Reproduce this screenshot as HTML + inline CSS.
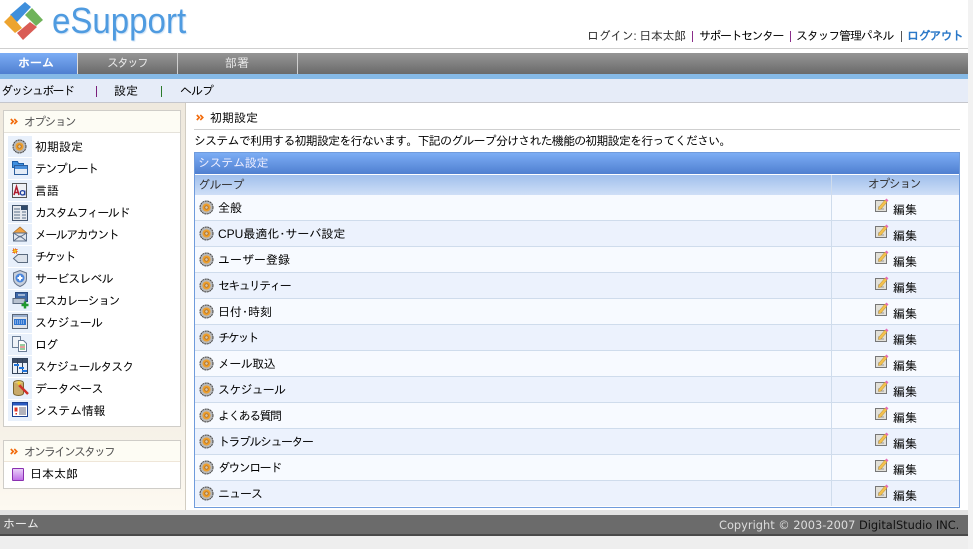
<!DOCTYPE html>
<html lang="ja"><head><meta charset="utf-8"><title>eSupport</title>
<style>
html,body{margin:0;padding:0;background:#f2f2f2}
#p{position:relative;width:973px;height:549px;overflow:hidden;background:#f2f2f2;font:12px/14px "Liberation Sans","IPAGothic","Noto Sans CJK JP",sans-serif;color:#000}
#p div,#p svg{position:absolute}
.t{white-space:nowrap}
.g{color:#555}
.sep{width:1px;height:11px}
.ic{left:8px;width:24px;height:21px;background:#e8f0fb}
.r1,.r2{left:195px;width:764px;height:25px}
.r1{background:#f7faff}.r2{background:#ecf2fd}
.l{left:195px;width:764px;height:1px;background:#cfdcec}
</style></head><body><div id="p">
<svg width="0" height="0" style="position:absolute"><defs>
<g id="disc"><circle cx="7.5" cy="7.5" r="6.5" fill="#b8b8b8" stroke="#444" stroke-dasharray="2 .6"/><circle cx="7.5" cy="7.5" r="4" fill="#ee9f2c"/><circle cx="7.5" cy="7.5" r="1.700" fill="#d8c8a8" stroke="#a5601a" stroke-width=".7"/></g>
<g id="pen"><rect x=".5" y="2.500" width="11" height="11" fill="#e2e0d8" stroke="#777"/><path d="M3 11h6M3 9h3" stroke="#999"/><path d="M4 9l6-7 2 2-6 7-2.500.500z" fill="#f3c14f" stroke="#b78a28" stroke-width=".5"/><path d="M10 2l1.500-1.500 2 2L12 4z" fill="#e56bb5"/></g>
<g id="arr" fill="none" stroke="#f26a0a" stroke-width="1.600"><path d="M.8 1l2.500 2.500L.8 6M4.300 1l2.500 2.500L4.300 6"/></g>
</defs></svg>

<!-- header -->
<div style="left:0;top:0;width:968px;height:53px;background:#fff"></div>
<div style="left:0;top:48px;width:968px;height:1px;background:#cfcfcf"></div>
<svg style="left:0;top:0" width="50" height="42" viewBox="0 0 50 42">
<path d="M25 2l6 5-14 15-7-7z" fill="#3f8fdc"/><path d="M32 8l11 12-7 6-11-11z" fill="#6fb35a"/><path d="M37 27L23 40l-6-7 13-11z" fill="#d95c55"/><path d="M4 22l7-7 11 13-7 5z" fill="#eda42f"/>
</svg>
<div class="t" style="left:52px;top:-3px;font-size:36px;line-height:48px;color:#4f9be0;transform:scaleX(.918);transform-origin:0 0;text-shadow:1px 1px 1px #cfe2f5">eSupport</div>
<div class="t g" style="left:587px;top:29px;color:#333;letter-spacing:-.4px">ログイン: 日本太郎</div>
<div class="sep" style="left:692px;top:31px;background:#8a2d8a"></div>
<div class="t" style="left:699px;top:29px;letter-spacing:-1.500px">サポートセンター</div>
<div class="sep" style="left:790px;top:31px;background:#8a2d8a"></div>
<div class="t" style="left:796px;top:29px;letter-spacing:-1.200px">スタッフ管理パネル</div>
<div class="sep" style="left:901px;top:31px;background:#555"></div>
<div class="t" style="left:907px;top:29px;color:#2a78c8;font-weight:bold;letter-spacing:-.8px">ログアウト</div>

<!-- tabs -->
<div style="left:0;top:53px;width:968px;height:21px;background:linear-gradient(#959595,#6a6a6a)"></div>
<div style="left:0;top:53px;width:77px;height:21px;background:linear-gradient(#7cadf5,#4f7fd0)"></div>
<div style="left:77px;top:53px;width:1px;height:21px;background:#dcdcdc"></div>
<div style="left:177px;top:53px;width:1px;height:21px;background:#cfcfcf"></div>
<div style="left:297px;top:53px;width:1px;height:21px;background:#cfcfcf"></div>
<div class="t" style="left:18px;top:56px;color:#fff;font-weight:bold">ホーム</div>
<div class="t" style="left:107px;top:56px;color:#e8e8e8;letter-spacing:-2px">スタッフ</div>
<div class="t" style="left:225px;top:56px;color:#e8e8e8">部署</div>
<div style="left:0;top:74px;width:968px;height:5px;background:#85b9e6"></div>
<div style="left:0;top:79px;width:968px;height:23px;background:#e6ecf8"></div>
<div style="left:0;top:102px;width:968px;height:1px;background:#c5c6cc"></div>
<div class="t" style="left:1px;top:84px;letter-spacing:-1.700px">ダッシュボード</div>
<div class="sep" style="left:96px;top:86px;background:#7a1f7a"></div>
<div class="t" style="left:114px;top:84px">設定</div>
<div class="sep" style="left:161px;top:86px;background:#2a7a2a"></div>
<div class="t" style="left:180px;top:84px;letter-spacing:-1px">ヘルプ</div>

<!-- sidebar -->
<div style="left:0;top:103px;width:185px;height:407px;background:linear-gradient(#efe9de 0,#f2ede3 70%,#fdf9f1 100%)"></div>
<div style="left:185px;top:103px;width:1px;height:407px;background:#d2cdc2"></div>
<div style="left:186px;top:103px;width:782px;height:407px;background:#fff"></div>
<div style="left:3px;top:110px;width:176px;height:315px;background:#fff;border:1px solid #cfcdc8"></div>
<div style="left:4px;top:111px;width:176px;height:21px;background:#fdfcf4;border-bottom:1px solid #e5e2da"></div>
<svg style="left:10px;top:118px" width="8" height="7"><use href="#arr"/></svg>
<div class="t g" style="left:24px;top:115px;letter-spacing:-1.800px">オプション</div>

<div class="ic" style="top:136px"></div><div class="ic" style="top:158px"></div><div class="ic" style="top:180px"></div><div class="ic" style="top:202px"></div><div class="ic" style="top:224px"></div><div class="ic" style="top:246px"></div><div class="ic" style="top:268px"></div><div class="ic" style="top:290px"></div><div class="ic" style="top:312px"></div><div class="ic" style="top:334px"></div><div class="ic" style="top:356px"></div><div class="ic" style="top:378px"></div><div class="ic" style="top:400px"></div>

<!-- menu icons -->
<svg style="left:12px;top:139px" width="15" height="15"><use href="#disc"/></svg>
<svg style="left:12px;top:160px" width="16" height="16"><path d="M.5 1.500h5l1 2h5v4h-11z" fill="#3d8fe0" stroke="#1e5fa8"/><rect x="2.500" y="5.500" width="13" height="9" fill="#e4ecf6" stroke="#2d5f9e"/><rect x="3" y="6" width="12" height="3" fill="#4a90dc"/></svg>
<svg style="left:12px;top:183px" width="16" height="16"><rect x=".5" y=".5" width="14" height="14" fill="#eef0f4" stroke="#555"/><path d="M2 12l2.500-8.500L7 12M3 9.500h3" fill="none" stroke="#b01c2e" stroke-width="1.500"/><circle cx="10.500" cy="9.800" r="2.200" fill="none" stroke="#1d3f9e" stroke-width="1.300"/><path d="M12.800 7.500v4.800" stroke="#1d3f9e" stroke-width="1.200"/></svg>
<svg style="left:12px;top:205px" width="16" height="16"><rect x=".5" y=".5" width="15" height="15" fill="#e6e9ee" stroke="#44566e"/><rect x="9" y="1" width="6" height="4" fill="#2f4a6b"/><path d="M2 4h6M2 7h6M2 10h6M2 13h6M10 7h4M10 10h4M10 13h4" stroke="#5a6e88"/></svg>
<svg style="left:12px;top:226px" width="16" height="16"><path d="M1 7l7-6 7 6z" fill="#f0a040" stroke="#a8702a" stroke-width=".7"/><rect x="1.500" y="7" width="13" height="8" fill="#dfe5ee" stroke="#5d6e88"/><path d="M1.500 15l6.500-5 6.500 5M1.500 7L8 11l6.500-4" fill="none" stroke="#5d6e88"/></svg>
<svg style="left:12px;top:248px" width="16" height="16"><path d="M6 6.500h9.500v8H6L1.500 10.500z" fill="#dce2ea" stroke="#5a6a7e"/><rect x="1" y="1" width="4" height="4" fill="#f4c020" stroke="#e03020" stroke-dasharray="1 1"/></svg>
<svg style="left:12px;top:270px" width="16" height="17"><path d="M8 .5l6.500 2.500v6c0 3.500-3 6-6.500 7.500-3.500-1.500-6.500-4-6.500-7.500V3z" fill="#c8d0dc" stroke="#66748a"/><circle cx="8" cy="8" r="4.500" fill="#4a86dc"/><path d="M8 5.500v5M5.500 8h5" stroke="#fff" stroke-width="2"/></svg>
<svg style="left:12px;top:292px" width="17" height="17"><rect x="3.500" y=".5" width="12" height="9" fill="#3d68a8" stroke="#2a4a80"/><rect x="1" y="6.500" width="12" height="5" fill="#b8c2d0" stroke="#5a6a80"/><path d="M6 3h7" stroke="#fff"/><path d="M9.500 13h7M13 9.500v7" stroke="#1f9a2e" stroke-width="2.500"/></svg>
<svg style="left:12px;top:314px" width="16" height="16"><rect x=".5" y=".5" width="15" height="14" fill="#dfe3ea" stroke="#5a6678"/><rect x="1" y="1" width="14" height="2" fill="#9ab0d0"/><rect x="2" y="5" width="12" height="6" fill="#2f74d0"/><path d="M3 7h10M3 9h10" stroke="#cfe0f8" stroke-dasharray="1 1"/></svg>
<svg style="left:12px;top:336px" width="16" height="16"><rect x=".5" y=".5" width="8" height="11" fill="#eef2f8" stroke="#6a7d96"/><path d="M6.500 4.500h5l3 3v8h-8z" fill="#fff" stroke="#6a7d96"/><path d="M8 9h5" stroke="#2f9a3e"/><path d="M8 11h5" stroke="#d03a3a"/><path d="M8 13h5" stroke="#2f9a3e"/></svg>
<svg style="left:12px;top:358px" width="16" height="16"><rect x=".5" y=".5" width="15" height="15" fill="#eaf0f8" stroke="#34445a"/><rect x="1" y="1" width="14" height="4" fill="#3c4c66"/><path d="M5.500 1v14M10.500 1v14" stroke="#34445a"/><path d="M2 7h5M7 10h5M10 13h5" stroke="#1f74dc" stroke-width="2"/></svg>
<svg style="left:12px;top:379px" width="17" height="18"><ellipse cx="6.500" cy="4" rx="5" ry="2.500" fill="#d8c38c" stroke="#7a6530"/><path d="M1.500 4v10c0 1.500 2.200 2.500 5 2.500s5-1 5-2.500V4" fill="#c9aa6a" stroke="#7a6530"/><path d="M7 6l9 9" stroke="#d03028" stroke-width="2.500"/><path d="M7 1.500l1 2 2 .5-2 1-1 2-1-2-2-1 2-.5z" fill="#f4d030"/></svg>
<svg style="left:12px;top:402px" width="16" height="16"><rect x=".5" y=".5" width="15" height="14" fill="#fff" stroke="#1a3f90"/><rect x="1" y="1" width="14" height="2.500" fill="#2a5ac0"/><path d="M7 6h7M7 8h7M7 10h7M7 12h7" stroke="#667"/><rect x="2.500" y="5.500" width="3" height="4" fill="#e03020"/><rect x="3.500" y="11" width="1.500" height="1.500" fill="#e03020"/></svg>

<!-- menu text -->
<div class="t" style="left:35px;top:140px">初期設定</div>
<div class="t" style="left:35px;top:162px;letter-spacing:-1.600px">テンプレート</div>
<div class="t" style="left:35px;top:184px">言語</div>
<div class="t" style="left:35px;top:206px;letter-spacing:-1.600px">カスタムフィールド</div>
<div class="t" style="left:35px;top:228px;letter-spacing:-1.600px">メールアカウント</div>
<div class="t" style="left:35px;top:250px;letter-spacing:-2.200px">チケット</div>
<div class="t" style="left:35px;top:272px;letter-spacing:-.9px">サービスレベル</div>
<div class="t" style="left:35px;top:294px;letter-spacing:-1.500px">エスカレーション</div>
<div class="t" style="left:35px;top:316px;letter-spacing:-.8px">スケジュール</div>
<div class="t" style="left:35px;top:338px;letter-spacing:-1px">ログ</div>
<div class="t" style="left:35px;top:360px;letter-spacing:-1.100px">スケジュールタスク</div>
<div class="t" style="left:35px;top:382px;letter-spacing:-.7px">データベース</div>
<div class="t" style="left:35px;top:404px;letter-spacing:-.3px">システム情報</div>

<!-- online -->
<div style="left:3px;top:440px;width:176px;height:47px;background:#fff;border:1px solid #cfcdc8"></div>
<div style="left:4px;top:441px;width:176px;height:20px;background:#fdfcf4;border-bottom:1px solid #efe6d8"></div>
<svg style="left:10px;top:448px" width="8" height="7"><use href="#arr"/></svg>
<div class="t g" style="left:24px;top:445px;letter-spacing:-2px">オンラインスタッフ</div>
<div style="left:12px;top:468px;width:10px;height:11px;background:linear-gradient(#e8d0f8,#c070e8);border:1px solid #8a30b0;border-radius:1px"></div>
<div class="t" style="left:30px;top:467px">日本太郎</div>

<!-- main -->
<svg style="left:196px;top:114px" width="8" height="7"><use href="#arr"/></svg>
<div class="t" style="left:210px;top:111px">初期設定</div>
<div style="left:194px;top:129px;width:766px;height:1px;background:#cfcfcf"></div>
<div class="t" style="left:194px;top:134px;letter-spacing:-.82px">システムで利用する初期設定を行ないます。下記のグループ分けされた機能の初期設定を行ってください。</div>

<div style="left:194px;top:152px;width:764px;height:354px;border:1px solid #6f9bdc;background:#fff"></div>
<div style="left:195px;top:153px;width:764px;height:21px;background:linear-gradient(#7cadf5,#4f7fd0)"></div>
<div class="t" style="left:198px;top:156px;color:#eef;letter-spacing:-.3px">システム設定</div>
<div style="left:195px;top:175px;width:764px;height:20px;background:linear-gradient(#a0bfec,#cfdff7)"></div>
<div class="t" style="left:198px;top:178px;color:#333;letter-spacing:-.5px">グループ</div>
<div class="t" style="left:868px;top:177px;color:#333;letter-spacing:-1.600px">オプション</div>

<div class="r1" style="top:195px"></div><div class="r2" style="top:221px"></div><div class="r1" style="top:247px"></div><div class="r2" style="top:273px"></div><div class="r1" style="top:299px"></div><div class="r2" style="top:325px"></div><div class="r1" style="top:351px"></div><div class="r2" style="top:377px"></div><div class="r1" style="top:403px"></div><div class="r2" style="top:429px"></div><div class="r1" style="top:455px"></div><div class="r2" style="top:481px"></div>
<div class="l" style="top:220px"></div><div class="l" style="top:246px"></div><div class="l" style="top:272px"></div><div class="l" style="top:298px"></div><div class="l" style="top:324px"></div><div class="l" style="top:350px"></div><div class="l" style="top:376px"></div><div class="l" style="top:402px"></div><div class="l" style="top:428px"></div><div class="l" style="top:454px"></div><div class="l" style="top:480px"></div>
<div style="left:831px;top:175px;width:1px;height:331px;background:#cfdcec"></div>

<svg style="left:199px;top:200px" width="15" height="15"><use href="#disc"/></svg><div class="t" style="left:218px;top:201px">全般</div>
<svg style="left:199px;top:226px" width="15" height="15"><use href="#disc"/></svg><div class="t" style="left:218px;top:227px">CPU最適化･サーバ設定</div>
<svg style="left:199px;top:252px" width="15" height="15"><use href="#disc"/></svg><div class="t" style="left:218px;top:253px">ユーザー登録</div>
<svg style="left:199px;top:278px" width="15" height="15"><use href="#disc"/></svg><div class="t" style="left:218px;top:279px;letter-spacing:-1.700px">セキュリティー</div>
<svg style="left:199px;top:304px" width="15" height="15"><use href="#disc"/></svg><div class="t" style="left:218px;top:305px">日付･時刻</div>
<svg style="left:199px;top:330px" width="15" height="15"><use href="#disc"/></svg><div class="t" style="left:218px;top:331px;letter-spacing:-2.200px">チケット</div>
<svg style="left:199px;top:356px" width="15" height="15"><use href="#disc"/></svg><div class="t" style="left:218px;top:357px;letter-spacing:-.6px">メール取込</div>
<svg style="left:199px;top:382px" width="15" height="15"><use href="#disc"/></svg><div class="t" style="left:218px;top:383px;letter-spacing:-.8px">スケジュール</div>
<svg style="left:199px;top:408px" width="15" height="15"><use href="#disc"/></svg><div class="t" style="left:218px;top:409px;letter-spacing:-1.600px">よくある質問</div>
<svg style="left:199px;top:434px" width="15" height="15"><use href="#disc"/></svg><div class="t" style="left:218px;top:435px;letter-spacing:-1.500px">トラブルシューター</div>
<svg style="left:199px;top:460px" width="15" height="15"><use href="#disc"/></svg><div class="t" style="left:218px;top:461px;letter-spacing:-1.600px">ダウンロード</div>
<svg style="left:199px;top:486px" width="15" height="15"><use href="#disc"/></svg><div class="t" style="left:218px;top:487px;letter-spacing:-1px">ニュース</div>

<svg style="left:875px;top:198px" width="14" height="14"><use href="#pen"/></svg><div class="t" style="left:893px;top:203px">編集</div>
<svg style="left:875px;top:224px" width="14" height="14"><use href="#pen"/></svg><div class="t" style="left:893px;top:229px">編集</div>
<svg style="left:875px;top:250px" width="14" height="14"><use href="#pen"/></svg><div class="t" style="left:893px;top:255px">編集</div>
<svg style="left:875px;top:276px" width="14" height="14"><use href="#pen"/></svg><div class="t" style="left:893px;top:281px">編集</div>
<svg style="left:875px;top:302px" width="14" height="14"><use href="#pen"/></svg><div class="t" style="left:893px;top:307px">編集</div>
<svg style="left:875px;top:328px" width="14" height="14"><use href="#pen"/></svg><div class="t" style="left:893px;top:333px">編集</div>
<svg style="left:875px;top:354px" width="14" height="14"><use href="#pen"/></svg><div class="t" style="left:893px;top:359px">編集</div>
<svg style="left:875px;top:380px" width="14" height="14"><use href="#pen"/></svg><div class="t" style="left:893px;top:385px">編集</div>
<svg style="left:875px;top:406px" width="14" height="14"><use href="#pen"/></svg><div class="t" style="left:893px;top:411px">編集</div>
<svg style="left:875px;top:432px" width="14" height="14"><use href="#pen"/></svg><div class="t" style="left:893px;top:437px">編集</div>
<svg style="left:875px;top:458px" width="14" height="14"><use href="#pen"/></svg><div class="t" style="left:893px;top:463px">編集</div>
<svg style="left:875px;top:484px" width="14" height="14"><use href="#pen"/></svg><div class="t" style="left:893px;top:489px">編集</div>

<!-- footer -->
<div style="left:0;top:510px;width:968px;height:5px;background:#e3e3e3"></div>
<div style="left:0;top:515px;width:968px;height:19px;background:#6b6b6b"></div>
<div style="left:0;top:534px;width:968px;height:2px;background:#4a4a4a"></div>
<div style="left:0;top:536px;width:968px;height:13px;background:#eeeeee"></div>
<div class="t" style="left:3px;top:517px;color:#eee">ホーム</div>
<div class="t" style="left:719px;top:518px;color:#ddd;font:11.400px/14px 'DejaVu Sans',sans-serif">Copyright © 2003-2007 <span style="color:#111">DigitalStudio INC.</span></div>
</div></body></html>
